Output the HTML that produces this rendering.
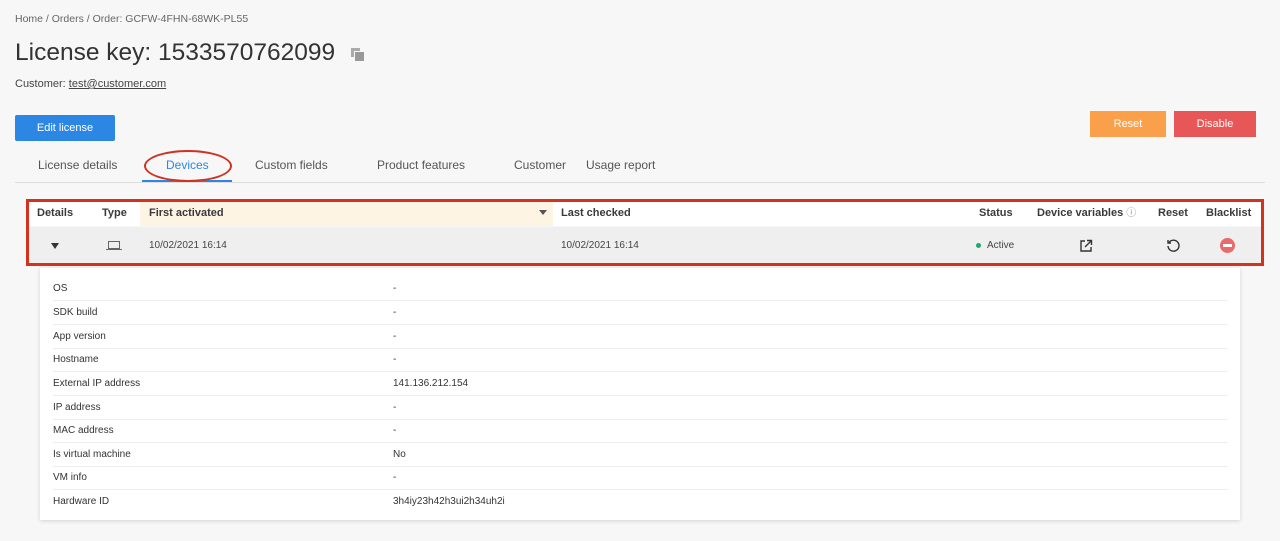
<!DOCTYPE html><html><head><style>
body{margin:0;width:1280px;height:541px;background:#f7f7f7;font-family:"Liberation Sans",sans-serif;color:#333;position:relative;overflow:hidden}
.a{position:absolute;white-space:nowrap}
.th{position:absolute;top:201px;height:25px;line-height:25px;font-size:11px;font-weight:bold;color:#3a3a3a}
.td{position:absolute;top:227px;height:37px;line-height:37px;font-size:10px;color:#444}
.row{position:absolute;left:53px;width:1175px;height:23px;border-bottom:1px solid #eee;font-size:10px;line-height:24px;color:#333}
.row span{position:absolute;left:340px}
</style></head><body>
<div class="a" style="left:15px;top:13px;font-size:10.5px;color:#666">Home / Orders / Order: GCFW-4FHN-68WK-PL55</div>
<div class="a" style="left:15px;top:39px;font-size:24.5px;color:#333">License key: 1533570762099</div>
<div class="a" style="left:351px;top:48px;width:9px;height:9px;background:#aaa"></div>
<div class="a" style="left:354px;top:51px;width:9px;height:9px;background:#999;border-left:1px solid #f7f7f7;border-top:1px solid #f7f7f7"></div>
<div class="a" style="left:15px;top:78px;font-size:11px;color:#444">Customer: <u>test@customer.com</u></div>
<div class="a" style="left:15px;top:115px;width:100px;height:26px;background:#2b87e3;border-radius:2px;color:#fff;font-size:11px;line-height:26px;text-align:center">Edit license</div>
<div class="a" style="left:1090px;top:111px;width:76px;height:26px;background:#fba04a;color:#fff;font-size:11px;line-height:26px;text-align:center">Reset</div>
<div class="a" style="left:1174px;top:111px;width:82px;height:26px;background:#e85757;color:#fff;font-size:11px;line-height:26px;text-align:center">Disable</div>
<div class="a" style="left:15px;top:182px;width:1250px;height:1px;background:#ddd"></div>
<div class="a" style="left:38px;top:158px;font-size:12px;color:#555">License details</div>
<div class="a" style="left:166px;top:158px;font-size:12px;color:#2b87e3">Devices</div>
<div class="a" style="left:142px;top:180px;width:90px;height:2px;background:#2b87e3"></div>
<div class="a" style="left:144px;top:150px;width:84px;height:28px;border:2px solid #cc3322;border-radius:50%"></div>
<div class="a" style="left:255px;top:158px;font-size:12px;color:#555">Custom fields</div>
<div class="a" style="left:377px;top:158px;font-size:12px;color:#555">Product features</div>
<div class="a" style="left:514px;top:158px;font-size:12px;color:#555">Customer</div>
<div class="a" style="left:586px;top:158px;font-size:12px;color:#555">Usage report</div>

<div class="a" style="left:28px;top:201px;width:1234px;height:25px;background:#fff"></div>
<div class="a" style="left:140px;top:201px;width:413px;height:25px;background:#fdf4e4"></div>
<div class="a" style="left:28px;top:227px;width:1234px;height:37px;background:#efefef"></div>
<div class="th" style="left:37px">Details</div>
<div class="th" style="left:102px">Type</div>
<div class="th" style="left:149px">First activated</div>
<div class="a" style="left:539px;top:210px;border-left:4px solid transparent;border-right:4px solid transparent;border-top:5px solid #555"></div>
<div class="th" style="left:561px">Last checked</div>
<div class="th" style="left:979px">Status</div>
<div class="th" style="left:1037px">Device variables <span style="font-weight:normal;color:#888;font-size:10px">ⓘ</span></div>
<div class="th" style="left:1158px">Reset</div>
<div class="th" style="left:1206px">Blacklist</div>
<div class="a" style="left:51px;top:243px;border-left:4px solid transparent;border-right:4px solid transparent;border-top:6px solid #333"></div>
<svg class="a" style="left:106px;top:240px" width="16" height="11"><rect x="2.5" y="1.5" width="11" height="7" fill="none" stroke="#666"/><line x1="0" y1="9.5" x2="16" y2="9.5" stroke="#666"/></svg>
<div class="td" style="left:149px">10/02/2021 16:14</div>
<div class="td" style="left:561px">10/02/2021 16:14</div>
<div class="a" style="left:976px;top:243px;width:5px;height:5px;border-radius:50%;background:#1aab6e"></div>
<div class="td" style="left:987px">Active</div>
<svg class="a" style="left:1079px;top:239px" width="14" height="14" fill="none" stroke="#333" stroke-width="1.4"><path d="M6 2H2v10h10V8M8 1.5h4.5V6M12.5 1.5L6 8"/></svg>
<svg class="a" style="left:1166px;top:238px" width="15" height="15" fill="none" stroke="#333" stroke-width="1.4"><path d="M3 4.5A5.5 5.5 0 1 1 2 8"/><path d="M2 2v3h3"/></svg>
<div class="a" style="left:1220px;top:238px;width:15px;height:15px;border-radius:50%;background:#e86a6a"></div>
<div class="a" style="left:1223px;top:244px;width:9px;height:3px;background:#fff"></div>
<div class="a" style="left:26px;top:199px;width:1232px;height:61px;border:3px solid #d3321d"></div>

<div class="a" style="left:40px;top:268px;width:1200px;height:252px;background:#fff;box-shadow:0 1px 4px rgba(0,0,0,.15)"></div>
<div class="row" style="top:277px">OS<span>-</span></div>
<div class="row" style="top:301px">SDK build<span>-</span></div>
<div class="row" style="top:325px">App version<span>-</span></div>
<div class="row" style="top:348px">Hostname<span>-</span></div>
<div class="row" style="top:372px">External IP address<span>141.136.212.154</span></div>
<div class="row" style="top:396px">IP address<span>-</span></div>
<div class="row" style="top:419px">MAC address<span>-</span></div>
<div class="row" style="top:443px">Is virtual machine<span>No</span></div>
<div class="row" style="top:466px">VM info<span>-</span></div>
<div class="row" style="top:490px;border:none">Hardware ID<span>3h4iy23h42h3ui2h34uh2i</span></div>
</body></html>
